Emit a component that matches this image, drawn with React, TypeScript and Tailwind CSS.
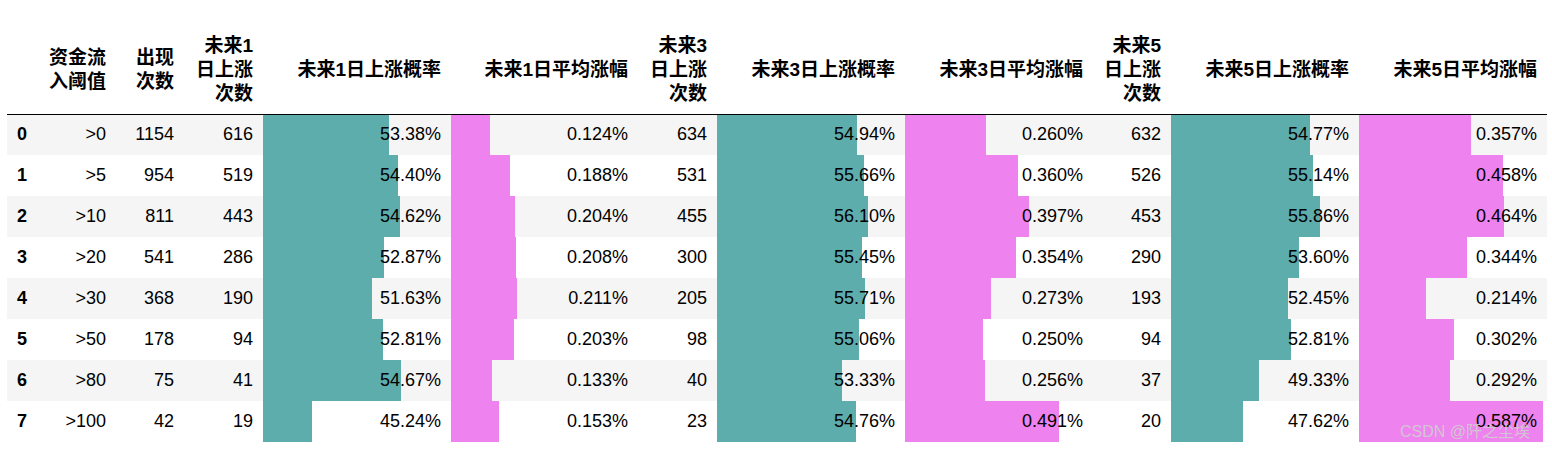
const TEAL = "#5eadad";
const VIOLET = "#ee82ee";

// threshold, count, then (up, prob, mean) for 1 / 3 / 5 days
type Row = [string, number, number, number, number, number, number, number, number, number, number];

const rows: Row[] = [
  [">0", 1154, 616, 53.38, 0.124, 634, 54.94, 0.26, 632, 54.77, 0.357],
  [">5", 954, 519, 54.4, 0.188, 531, 55.66, 0.36, 526, 55.14, 0.458],
  [">10", 811, 443, 54.62, 0.204, 455, 56.1, 0.397, 453, 55.86, 0.464],
  [">20", 541, 286, 52.87, 0.208, 300, 55.45, 0.354, 290, 53.6, 0.344],
  [">30", 368, 190, 51.63, 0.211, 205, 55.71, 0.273, 193, 52.45, 0.214],
  [">50", 178, 94, 52.81, 0.203, 98, 55.06, 0.25, 94, 52.81, 0.302],
  [">80", 75, 41, 54.67, 0.133, 40, 53.33, 0.256, 37, 49.33, 0.292],
  [">100", 42, 19, 45.24, 0.153, 23, 54.76, 0.491, 20, 47.62, 0.587],
];

const headers: string[][] = [
  [],
  ["资金流", "入阈值"],
  ["出现", "次数"],
  ["未来1", "日上涨", "次数"],
  ["未来1日上涨概率"],
  ["未来1日平均涨幅"],
  ["未来3", "日上涨", "次数"],
  ["未来3日上涨概率"],
  ["未来3日平均涨幅"],
  ["未来5", "日上涨", "次数"],
  ["未来5日上涨概率"],
  ["未来5日平均涨幅"],
];

const colClasses = [
  "w-[33px]",
  "w-[76px]",
  "w-[68px]",
  "w-[79px]",
  "w-[188px]",
  "w-[187px]",
  "w-[79px]",
  "w-[188px]",
  "w-[188px]",
  "w-[78px]",
  "w-[188px]",
  "w-[188px]",
];

function bar(color: string, pct: number) {
  const w = Math.max(0, Math.min(100, pct)).toFixed(2);
  return { background: `linear-gradient(90deg, ${color} ${w}%, transparent ${w}%)` };
}

// pandas-style bars: probability scaled 40..60, mean return scaled 0..0.6
const probStyle = (v: number) => bar(TEAL, ((v - 40) / 20) * 100);
const meanStyle = (v: number) => bar(VIOLET, (v / 0.6) * 100);

function Num({ children, style }: { children: React.ReactNode; style?: React.CSSProperties }) {
  return (
    <td className="h-[41px] p-0 pr-[10px] text-right align-middle whitespace-nowrap" style={style}>
      {children}
    </td>
  );
}

export default function App() {
  return (
    <div className="relative h-[452px] w-[1552px] bg-white pl-[7px] pt-[26px] text-black [font-family:'Liberation_Sans','Noto_Sans_CJK_SC',sans-serif]">
      <table className="table-fixed border-collapse text-[18px]">
        <colgroup>
          {colClasses.map((c, i) => (
            <col key={i} className={c} />
          ))}
        </colgroup>
        <thead>
          <tr className="h-[88px] border-b border-black">
            {headers.map((lines, i) => (
              <th
                key={i}
                className="p-0 pr-[10px] text-right align-middle text-[19px] leading-[24px] font-bold whitespace-nowrap"
              >
                {lines.map((l) => (
                  <div key={l}>{l}</div>
                ))}
              </th>
            ))}
          </tr>
        </thead>
        <tbody>
          {rows.map((r, i) => (
            <tr key={i} className="odd:bg-[#f5f5f5]">
              <th className="h-[41px] p-0 pl-[10px] text-left align-middle font-bold">{i}</th>
              <Num>{r[0]}</Num>
              <Num>{r[1]}</Num>
              <Num>{r[2]}</Num>
              <Num style={probStyle(r[3])}>{r[3].toFixed(2)}%</Num>
              <Num style={meanStyle(r[4])}>{r[4].toFixed(3)}%</Num>
              <Num>{r[5]}</Num>
              <Num style={probStyle(r[6])}>{r[6].toFixed(2)}%</Num>
              <Num style={meanStyle(r[7])}>{r[7].toFixed(3)}%</Num>
              <Num>{r[8]}</Num>
              <Num style={probStyle(r[9])}>{r[9].toFixed(2)}%</Num>
              <Num style={meanStyle(r[10])}>{r[10].toFixed(3)}%</Num>
            </tr>
          ))}
        </tbody>
      </table>

      {/* watermark, sits over the last cell as in the original */}
      <div className="absolute left-[1400px] top-[422px] text-[16px] leading-[20px] whitespace-nowrap text-[#cfcfcf]/90">
        CSDN @阡之尘埃
      </div>
    </div>
  );
}
